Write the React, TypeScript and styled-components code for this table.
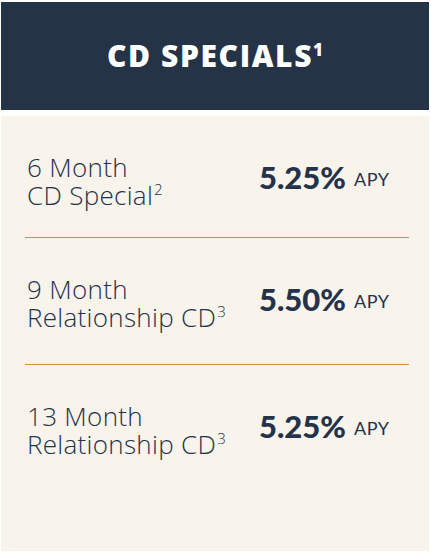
import React from "react";
import styled, { createGlobalStyle } from "styled-components";

const GlobalStyle = createGlobalStyle`
  html, body {
    margin: 0;
    padding: 0;
    background: #ffffff;
  }
  body {
    font-family: "Open Sans", Lato, "Liberation Sans", sans-serif;
    color: #24324a;
  }
`;

const specials = [
  { term: "6 Month", name: "CD Special", note: "2", rate: "5.25%" },
  { term: "9 Month", name: "Relationship CD", note: "3", rate: "5.50%" },
  { term: "13 Month", name: "Relationship CD", note: "3", rate: "5.25%" },
];

const App = () => {
  return (
    <>
      <GlobalStyle />
      <Wrapper>
        <Header>
          <Title>
            CD SPECIALS<Sup>1</Sup>
          </Title>
        </Header>
        <Panel>
          {specials.map((s, i) => (
            <Row key={s.term} $first={i === 0} $last={i === specials.length - 1}>
              <Label>
                <Line>{s.term}</Line>
                <Line>
                  {s.name}
                  <Note>{s.note}</Note>
                </Line>
              </Label>
              <Rate>
                <Percent>{s.rate}</Percent>
                <Apy>APY</Apy>
              </Rate>
            </Row>
          ))}
        </Panel>
      </Wrapper>
    </>
  );
};

const Wrapper = styled.div`
  width: 428px;
  padding: 2px 0 0 1px;
  display: flex;
  flex-direction: column;
  gap: 6px;
`;

const Header = styled.header`
  height: 108px;
  background: #253347;
  display: flex;
  align-items: center;
  justify-content: center;
`;

const Title = styled.h1`
  margin: 0;
  color: #ffffff;
  font-family: "Open Sans", Lato, sans-serif;
  font-size: 30px;
  font-weight: 800;
  line-height: 1;
  letter-spacing: 1.6px;
`;

const Sup = styled.span`
  font-size: 17px;
  line-height: 0;
  vertical-align: 11px;
  letter-spacing: 0;
`;

const Panel = styled.section`
  background: #f8f4ec;
  height: 435px;
  padding: 0 20px 0 24px;
`;

const Row = styled.div<{ $first?: boolean; $last?: boolean }>`
  display: flex;
  align-items: flex-start;
  padding: 37px 0 ${(p) => (p.$first ? "28px" : "33px")} 2px;
  border-bottom: ${(p) => (p.$last ? "none" : "1px solid #c9962a")};
`;

const Label = styled.div`
  flex: 1;
  display: flex;
  flex-direction: column;
  font-size: 26px;
  font-weight: 300;
  letter-spacing: 0.3px;
  color: #24324a;
`;

const Line = styled.div`
  height: 28px;
  line-height: 28px;
  white-space: nowrap;
`;

const Note = styled.span`
  font-size: 15px;
  line-height: 0;
  vertical-align: 10px;
  margin-left: 1px;
  letter-spacing: 0;
`;

const Rate = styled.div`
  width: 150px;
  display: flex;
  align-items: center;
  gap: 8px;
  padding-top: 8px;
`;

const Percent = styled.span`
  font-family: Lato, "Open Sans", sans-serif;
  font-size: 31px;
  font-weight: 900;
  line-height: 32px;
  color: #24324a;
`;

const Apy = styled.span`
  font-family: Lato, "Open Sans", sans-serif;
  font-size: 18px;
  line-height: 22px;
  padding-top: 3px;
  letter-spacing: 0.5px;
  color: #24324a;
`;

export default App;
